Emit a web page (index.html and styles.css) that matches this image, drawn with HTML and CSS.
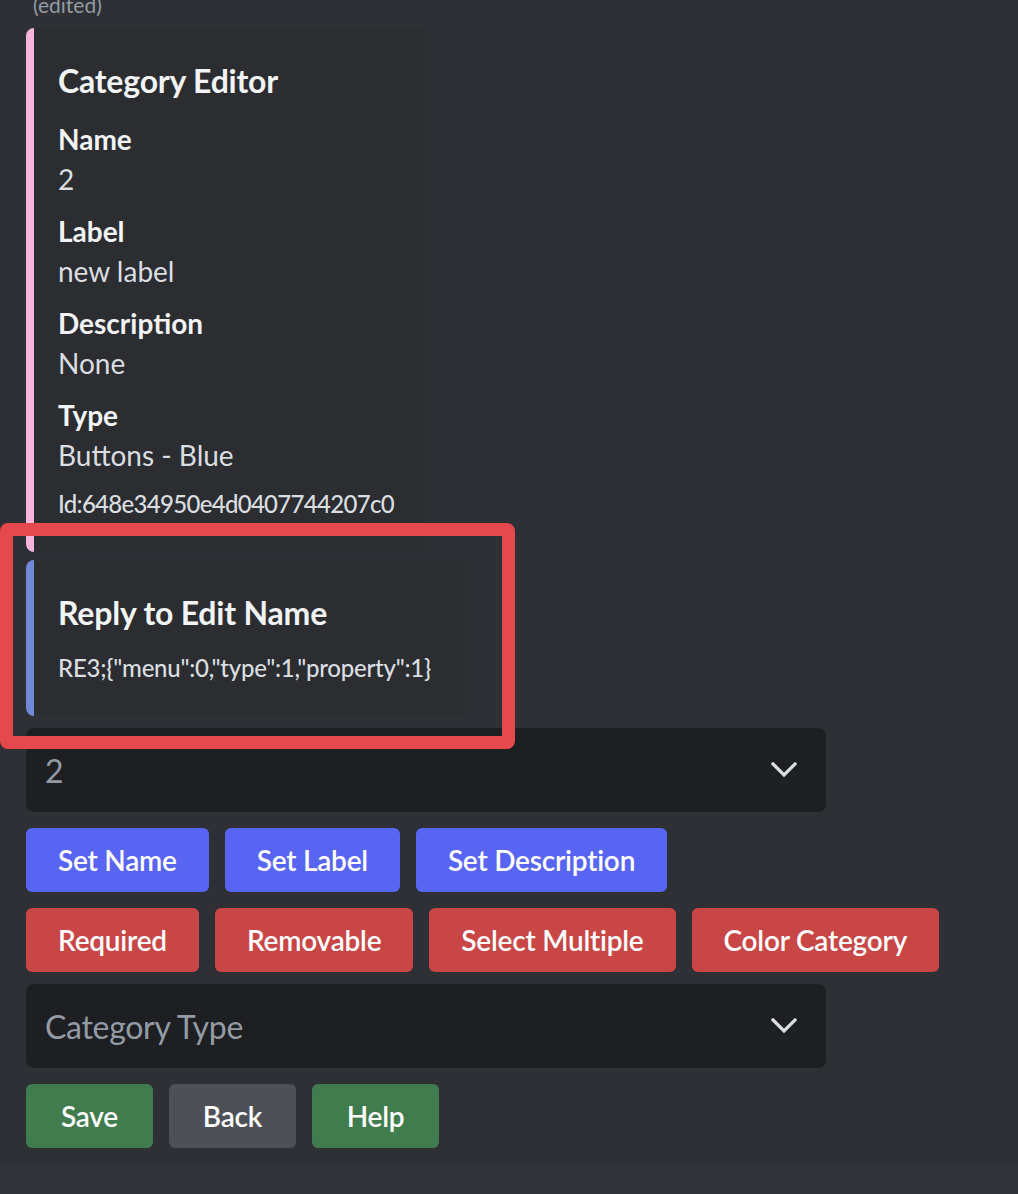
FILE: index.html
```html
<!DOCTYPE html>
<html lang="en">
<head>
    <meta charset="UTF-8">
    <title>Category Editor</title>
    <link rel="stylesheet" href="styles.css">
</head>
<body>
<div class="message">
    <div class="edited">(edited)</div>

    <div class="embed embed-pink">
        <div class="embed-title">Category Editor</div>
        <div class="fields">
            <div class="field">
                <div class="field-name">Name</div>
                <div class="field-value">2</div>
            </div>
            <div class="field">
                <div class="field-name">Label</div>
                <div class="field-value">new label</div>
            </div>
            <div class="field">
                <div class="field-name">Description</div>
                <div class="field-value">None</div>
            </div>
            <div class="field">
                <div class="field-name">Type</div>
                <div class="field-value">Buttons - Blue</div>
            </div>
        </div>
        <div class="embed-footer">Id:648e34950e4d0407744207c0</div>
    </div>

    <div class="embed embed-blue">
        <div class="embed-title">Reply to Edit Name</div>
        <div class="embed-footer footer-tight">RE3;{"menu":0,"type":1,"property":1}</div>
    </div>

    <div class="select">
        <span class="select-text">2</span>
        <svg class="chevron" width="26" height="16" viewBox="0 0 26 16">
            <path d="M2 2 L13 13 L24 2" fill="none" stroke="#dbdee1" stroke-width="3.2" stroke-linecap="square"/>
        </svg>
    </div>

    <div class="row">
        <button class="btn btn-blue">Set Name</button>
        <button class="btn btn-blue">Set Label</button>
        <button class="btn btn-blue">Set Description</button>
    </div>

    <div class="row">
        <button class="btn btn-red">Required</button>
        <button class="btn btn-red">Removable</button>
        <button class="btn btn-red">Select Multiple</button>
        <button class="btn btn-red">Color Category</button>
    </div>

    <div class="select select-second">
        <span class="select-text">Category Type</span>
        <svg class="chevron" width="26" height="16" viewBox="0 0 26 16">
            <path d="M2 2 L13 13 L24 2" fill="none" stroke="#dbdee1" stroke-width="3.2" stroke-linecap="square"/>
        </svg>
    </div>

    <div class="row">
        <button class="btn btn-green">Save</button>
        <button class="btn btn-grey">Back</button>
        <button class="btn btn-green">Help</button>
    </div>

    <div class="highlight"></div>
</div>
</body>
</html>
```

FILE: styles.css
```css
body {
    margin: 0;
    background: #313338;
    font-family: Lato, "Noto Sans", sans-serif;
    color: #dbdee1;
}
.message {
    position: relative;
    background: #2e3035;
    padding: 0 0 16px 26px;
}
.edited {
    font-size: 21px;
    line-height: 20px;
    color: #949ba4;
    margin-top: -5px;
    margin-left: 7px;
    height: 20px;
    margin-bottom: 13px;
}
.embed {
    background: #2b2d31;
    border-left: 8px solid #f5b5db;
    border-radius: 8px;
    padding: 31px 32px 32px 24px;
    box-sizing: border-box;
}
.embed-pink { width: 399px; }
.embed-blue {
    width: 439px;
    margin-top: 8px;
    border-left-color: #7289da;
}
.embed-title {
    font-size: 32px;
    line-height: 44px;
    font-weight: 700;
    color: #f2f3f5;
    letter-spacing: -0.2px;
}
.fields {
    margin-top: 18px;
    display: flex;
    flex-direction: column;
    gap: 16px;
}
.field-name {
    font-size: 28px;
    line-height: 36px;
    font-weight: 700;
    color: #f2f3f5;
    margin-bottom: 4px;
}
.field-value {
    font-size: 28px;
    line-height: 36px;
}
.embed-footer {
    font-size: 24px;
    line-height: 32px;
    font-weight: 500;
    margin-top: 15px;
    letter-spacing: -0.7px;
    white-space: nowrap;
}
.footer-tight {
    margin-top: 17px;
    letter-spacing: -0.25px;
}

.select {
    width: 800px;
    height: 84px;
    margin-top: 12px;
    background: #1e1f22;
    border-radius: 8px;
    display: flex;
    align-items: center;
    justify-content: space-between;
    padding: 0 29px 0 19px;
    box-sizing: border-box;
}
.select-text {
    font-size: 32px;
    color: #949ba4;
    letter-spacing: -0.3px;
}
.chevron { display: block; }

.row {
    display: flex;
    gap: 16px;
    margin-top: 16px;
}
.select-second { margin-top: 12px; }
.btn {
    height: 64px;
    min-width: 127px;
    padding: 0 32px;
    border: none;
    border-radius: 6px;
    font-family: Lato, "Noto Sans", sans-serif;
    font-size: 28px;
    font-weight: 600;
    letter-spacing: -0.22px;
    color: #fff;
}
.btn-blue  { background: #5865f2; }
.btn-red   { background: #c84646; }
.btn-green { background: #417c4e; }
.btn-grey  { background: #4e5058; }

.highlight {
    position: absolute;
    left: 0;
    top: 528px;
    width: 515px;
    height: 226px;
    box-sizing: border-box;
    border: 13px solid #e5484d;
    border-radius: 8px;
}
```
